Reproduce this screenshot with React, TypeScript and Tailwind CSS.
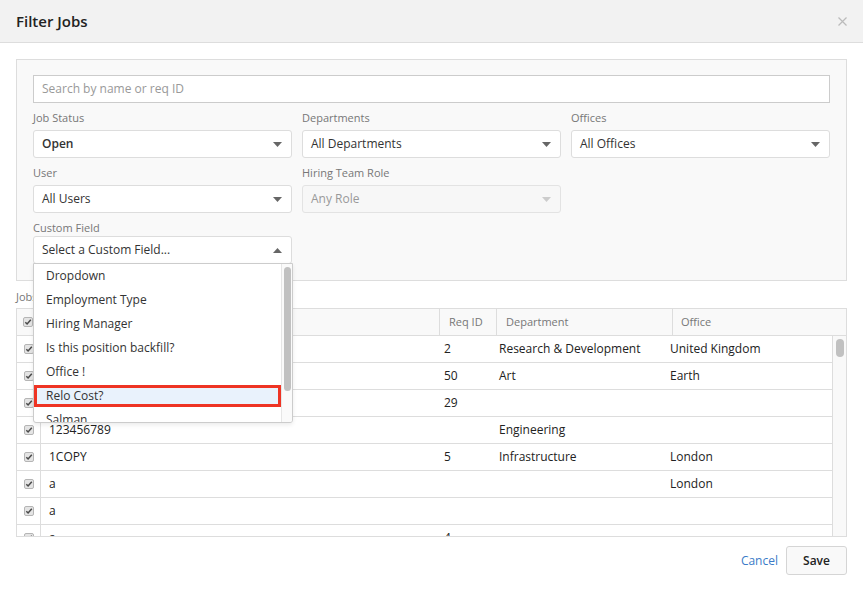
import React from "react";

function Arrow({ up = false, disabled = false }: { up?: boolean; disabled?: boolean }) {
  return (
    <svg width="9" height="5" viewBox="0 0 9 5" className="shrink-0">
      {up ? (
        <path d="M0 5 L4.5 0 L9 5 Z" fill={disabled ? "#cccccc" : "#666666"} />
      ) : (
        <path d="M0 0 L9 0 L4.5 5 Z" fill={disabled ? "#cccccc" : "#666666"} />
      )}
    </svg>
  );
}

function Select({ value, bold = false, disabled = false, up = false }: { value: string; bold?: boolean; disabled?: boolean; up?: boolean }) {
  return (
    <div
      className={`h-[28px] rounded-[3px] border flex items-center justify-between pl-[8px] pr-[9px] text-[12px] ${
        disabled ? "bg-[#f7f7f7] border-[#e3e3e3] text-[#999]" : "bg-white border-[#dddddd] text-[#333]"
      } ${bold ? "font-semibold" : ""}`}
    >
      <span>{value}</span>
      <Arrow up={up} disabled={disabled} />
    </div>
  );
}

function Label({ children }: { children: React.ReactNode }) {
  return <div className="text-[11px] leading-[16px] text-[#777]">{children}</div>;
}

function Check() {
  return (
    <span className="w-[10px] h-[10px] rounded-[2px] border border-[#b5b5b5] bg-[#e4e4e4] flex items-center justify-center">
      <svg width="8" height="8" viewBox="0 0 8 8">
        <path d="M1.3 4.2 L3.1 6 L6.8 1.8" stroke="#4a4a4a" strokeWidth="1.5" fill="none" />
      </svg>
    </span>
  );
}

const rows = [
  { name: "", req: "2", dept: "Research & Development", office: "United Kingdom" },
  { name: "", req: "50", dept: "Art", office: "Earth" },
  { name: "", req: "29", dept: "", office: "" },
  { name: "123456789", req: "", dept: "Engineering", office: "" },
  { name: "1COPY", req: "5", dept: "Infrastructure", office: "London" },
  { name: "a", req: "", dept: "", office: "London" },
  { name: "a", req: "", dept: "", office: "" },
  { name: "a", req: "4", dept: "", office: "" },
];

const options = [
  "Dropdown",
  "Employment Type",
  "Hiring Manager",
  "Is this position backfill?",
  "Office !",
  "Relo Cost?",
  "Salman",
];

export default function App() {
  return (
    <div className="w-[863px] h-[590px] bg-white font-['Open_Sans',sans-serif] text-[#333] overflow-hidden">
      {/* Header */}
      <div className="h-[43px] bg-[#f2f2f2] border-b border-[#dddddd] flex items-center justify-between pl-[16px] pr-[16px]">
        <h1 className="text-[15px] font-semibold text-[#222]">Filter Jobs</h1>
        <svg width="9" height="9" viewBox="0 0 9 9">
          <path d="M0.5 0.5 L8.5 8.5 M8.5 0.5 L0.5 8.5" stroke="#bbbbbb" strokeWidth="1.2" />
        </svg>
      </div>

      <div className="px-[16px] pt-[16px]">
        {/* Filter panel */}
        <div className="border border-[#dddddd] bg-[#f9f9f9] px-[16px] pt-[15px] pb-[16px]">
          <div className="h-[28px] border border-[#cccccc] bg-white flex items-center px-[8px] text-[12px] text-[#999]">
            Search by name or req ID
          </div>
          <div className="grid grid-cols-3 gap-x-[10px]">
            <div className="mt-[7px]">
              <Label>Job Status</Label>
              <div className="mt-[4px]">
                <Select value="Open" bold />
              </div>
            </div>
            <div className="mt-[7px]">
              <Label>Departments</Label>
              <div className="mt-[4px]">
                <Select value="All Departments" />
              </div>
            </div>
            <div className="mt-[7px]">
              <Label>Offices</Label>
              <div className="mt-[4px]">
                <Select value="All Offices" />
              </div>
            </div>
            <div className="mt-[7px]">
              <Label>User</Label>
              <div className="mt-[4px]">
                <Select value="All Users" />
              </div>
            </div>
            <div className="mt-[7px]">
              <Label>Hiring Team Role</Label>
              <div className="mt-[4px]">
                <Select value="Any Role" disabled />
              </div>
            </div>
            <div />
            <div className="mt-[7px]">
              <Label>Custom Field</Label>
              <div className="relative">
                <Select value="Select a Custom Field..." up />
                {/* open dropdown */}
                <div className="absolute left-0 top-[27px] w-[260px] h-[160px] bg-white border border-[#cccccc] rounded-b-[3px] shadow-[0_2px_4px_rgba(0,0,0,0.08)] z-10 flex overflow-hidden">
                  <div className="flex-1 overflow-hidden">
                    {options.map((o) =>
                      o === "Relo Cost?" ? (
                        <div key={o} className="h-[24px] py-[1px]">
                          <div className="h-[22px] border-[3px] border-[#ee3424] bg-[#e9f2fc] flex items-center pl-[9px] text-[12px] text-[#333]">
                            {o}
                          </div>
                        </div>
                      ) : (
                        <div key={o} className="h-[24px] flex items-center pl-[12px] text-[12px] text-[#333]">
                          {o}
                        </div>
                      )
                    )}
                  </div>
                  <div className="w-[11px] border-l border-[#e6e6e6] bg-[#fafafa] pt-[3px] flex justify-center">
                    <div className="w-[7px] h-[124px] rounded-full bg-[#c1c1c1]" />
                  </div>
                </div>
              </div>
            </div>
          </div>
        </div>

        {/* Jobs label */}
        <div className="mt-[8px] mb-[3px] text-[11px] leading-[16px] text-[#777]">Jobs</div>

        {/* Table */}
        <div className="border border-[#dddddd] h-[229px] overflow-hidden flex flex-col">
          <div className="h-[27px] shrink-0 bg-[#f9f9f9] border-b border-[#dddddd] flex text-[11px] text-[#777]">
            <div className="w-[23px] border-r border-[#dddddd] flex items-center justify-center">
              <Check />
            </div>
            <div className="w-[400px] border-r border-[#dddddd]" />
            <div className="w-[57px] border-r border-[#dddddd] flex items-center pl-[9px]">Req ID</div>
            <div className="w-[176px] border-r border-[#dddddd] flex items-center pl-[9px]">Department</div>
            <div className="flex-1 flex items-center pl-[8px]">Office</div>
          </div>
          <div className="flex flex-1 overflow-hidden">
            <div className="flex-1 overflow-hidden">
              {rows.map((r, i) => (
                <div key={i} className="h-[27px] shrink-0 border-b border-[#dddddd] flex text-[12px] text-[#222]">
                  <div className="w-[24px] border-r border-[#dddddd] flex items-center justify-center">
                    <Check />
                  </div>
                  <div className="w-[395px] flex items-center pl-[8px]">{r.name}</div>
                  <div className="w-[55px] flex items-center pl-[8px]">{r.req}</div>
                  <div className="w-[171px] flex items-center pl-[8px]">{r.dept}</div>
                  <div className="flex-1 flex items-center pl-[8px]">{r.office}</div>
                </div>
              ))}
            </div>
            <div className="w-[14px] shrink-0 border-l border-[#dddddd] bg-[#f9f9f9] pt-[3px] flex justify-center">
              <div className="w-[8px] h-[18px] rounded-full bg-[#c1c1c1]" />
            </div>
          </div>
        </div>

        {/* Footer */}
        <div className="mt-[9px] flex items-center justify-end gap-[8px]">
          <span className="text-[12px] text-[#3a7bc8]">Cancel</span>
          <button className="w-[61px] h-[29px] rounded-[3px] border border-[#d5d5d5] bg-[#f9f9f9] text-[12px] font-semibold text-[#222]">
            Save
          </button>
        </div>
      </div>
    </div>
  );
}
